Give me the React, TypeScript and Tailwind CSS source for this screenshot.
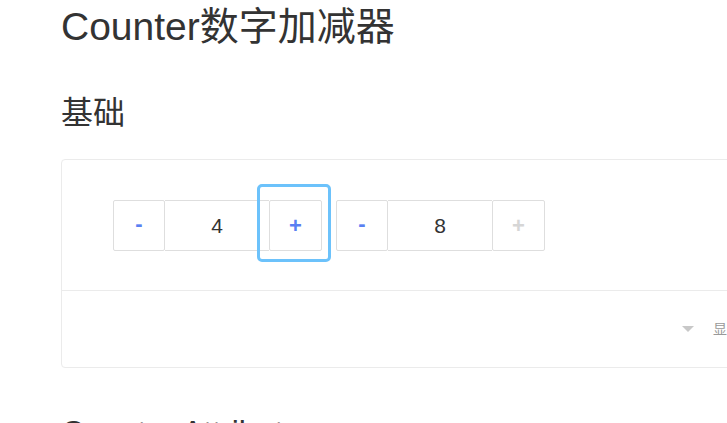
import React from "react";

const font = { fontFamily: '"Liberation Sans", "Noto Sans CJK SC", sans-serif' };

interface CounterProps {
  value: number;
  plusDisabled?: boolean;
  focused?: boolean;
}

function Counter({ value, plusDisabled, focused }: CounterProps) {
  return (
    <div className="flex">
      <button className="w-[52px] h-[51px] border border-[#dedede] rounded-[2px] flex items-center justify-center text-[22px] font-bold text-[#5a80f2] bg-white leading-none pb-[3px]">
        -
      </button>
      <div className="w-[104px] h-[51px] border-y border-[#dedede] flex items-center justify-center text-[21px] text-[#333] bg-white">
        {value}
      </div>
      <div className="relative">
        {focused && (
          <div className="absolute left-[-12px] top-[-16px] right-[-9px] bottom-[-11px] border-[3px] border-[#6cc2fb] rounded-[5px] pointer-events-none z-10" />
        )}
        <button
          className={`w-[53px] h-[51px] border border-[#dedede] rounded-[2px] flex items-center justify-center text-[22px] font-bold leading-none bg-white ${
            plusDisabled ? "text-[#d6d6d6]" : "text-[#5a80f2]"
          }`}
        >
          +
        </button>
      </div>
    </div>
  );
}

export default function App() {
  return (
    <div className="w-[727px] h-[423px] overflow-hidden bg-white text-[#333]" style={font}>
      <div className="pl-[61px]">
        <h1 className="text-[39px] leading-[46px] pt-[4px] whitespace-nowrap">Counter数字加减器</h1>
        <h3 className="text-[32px] leading-[36px] mt-[45px]">基础</h3>
        <div className="mt-[28px] w-[720px] border border-[#ebebeb] rounded-[4px]">
          <div className="h-[131px] pl-[51px] pt-[40px] flex items-start gap-[14px] border-b border-[#ebebeb]">
            <Counter value={4} focused />
            <Counter value={8} plusDisabled />
          </div>
          <div className="h-[76px] flex items-center justify-end pr-[11px]">
            <span className="w-0 h-0 border-l-[6px] border-r-[6px] border-t-[6px] border-l-transparent border-r-transparent border-t-[#c8c8c8] mr-[19px]" />
            <span className="text-[14px] text-[#999] whitespace-nowrap">显示代码</span>
          </div>
        </div>
        <h3 className="text-[32px] leading-[36px] mt-[46px] whitespace-nowrap">Counter Attributes</h3>
      </div>
    </div>
  );
}
